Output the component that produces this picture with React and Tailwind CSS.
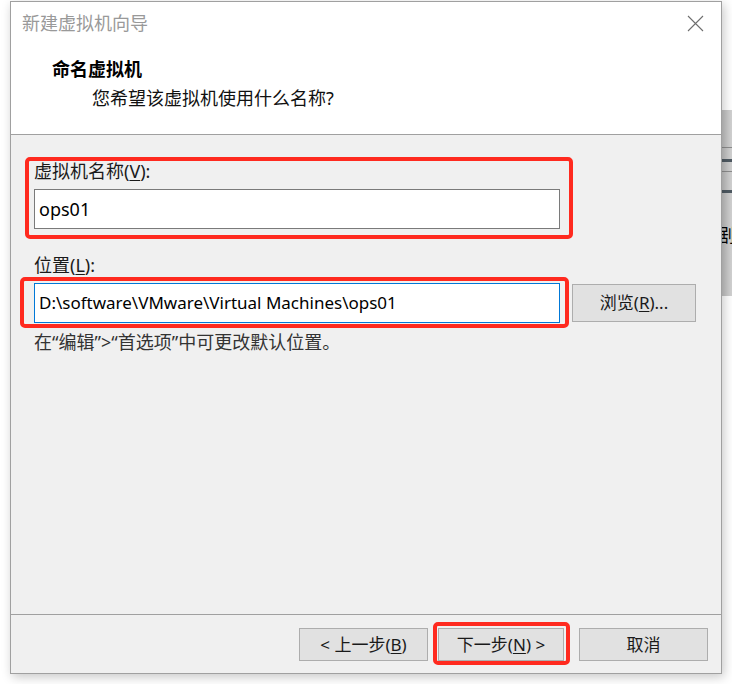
import React from "react";

const font = { fontFamily: '"Noto Sans", "Noto Sans CJK SC", sans-serif' };

function Btn({ children, className = "" }) {
    return (
        <div className={"flex h-[33px] items-center justify-center border border-[#adadad] bg-[#e1e1e1] text-[17px] text-[#1a1a1a] " + className}>
            {children}
        </div>
    );
}

export default function App() {
    return (
        <div className="relative h-[684px] w-[732px] overflow-hidden bg-white" style={font}>
            {/* window behind on the right */}
            <div className="absolute left-[716px] top-[110px] h-[186px] w-[20px] bg-gradient-to-r from-[#b9b9b9] to-[#d8d8d8]">
                <div className="absolute left-0 top-[37px] h-[1px] w-full bg-[#8d8d8d]" />
                <div className="absolute left-0 top-[49px] h-[3px] w-full bg-[#4f5a63]" />
                <div className="absolute left-0 top-[61px] h-[1px] w-full bg-[#8d8d8d]" />
                <div className="absolute left-0 top-[80px] h-[3px] w-full bg-[#4f5a63]" />
                <div className="absolute left-[1px] top-[113px] text-[18px] leading-[24px] text-black">剧</div>
            </div>

            <div className="relative z-10 ml-[10px] mt-[1px] flex h-[673px] w-[712px] flex-col border border-[#a0a0a0] bg-[#f0f0f0] shadow-[2px_3px_10px_rgba(0,0,0,0.22)]">
                <div className="relative h-[133px] border-b border-[#a0a0a0] bg-white">
                    <div className="absolute left-[11px] top-[9px] text-[18px] leading-[24px] text-[#999]">新建虚拟机向导</div>
                    <svg className="absolute right-[17px] top-[13px]" width="17" height="17" viewBox="0 0 17 17">
                        <path d="M1 1 L16 16 M16 1 L1 16" stroke="#6e6e6e" strokeWidth="1.1" fill="none" />
                    </svg>
                    <div className="absolute left-[41px] top-[55px] text-[18px] font-bold leading-[24px] text-black">命名虚拟机</div>
                    <div className="absolute left-[81px] top-[84px] text-[18px] leading-[24px] text-[#111]">您希望该虚拟机使用什么名称?</div>
                </div>

                <div className="flex flex-1 flex-col pl-[23px] pt-[24px] text-[18px] text-[#1a1a1a]">
                    <div className="h-[24px] leading-[24px]">虚拟机名称(<span className="underline underline-offset-2">V</span>):</div>
                    <div className="mt-[6px] flex h-[40px] w-[526px] items-center border border-[#7a7a7a] bg-white pl-[4px] text-[18px] text-black">ops01</div>
                    <div className="mt-[24px] h-[24px] leading-[24px]">位置(<span className="underline underline-offset-2">L</span>):</div>
                    <div className="mt-[6px] flex items-center">
                        <div className="flex h-[40px] w-[526px] items-center border border-[#0078d7] bg-white pl-[4px] text-[17px] text-black">D:\software\VMware\Virtual Machines\ops01</div>
                        <Btn className="ml-[12px] h-[38px] w-[124px]">浏览(<span className="underline underline-offset-2">R</span>)...</Btn>
                    </div>
                    <div className="mt-[7px] h-[24px] leading-[24px] text-[18px] text-[#333]">在“编辑”&gt;“首选项”中可更改默认位置。</div>
                </div>

                <div className="flex h-[59px] items-start border-t border-[#a0a0a0] pr-[13px] pt-[13px]">
                    <div className="flex-1" />
                    <Btn className="w-[129px]">&lt; 上一步(<span className="underline underline-offset-2">B</span>)</Btn>
                    <Btn className="ml-[10px] w-[126px]">下一步(<span className="underline underline-offset-2">N</span>) &gt;</Btn>
                    <Btn className="ml-[15px] w-[129px]">取消</Btn>
                </div>
            </div>

            {/* red annotation frames */}
            <div className="absolute left-[25px] top-[157px] z-20 h-[82px] w-[548px] rounded-[5px] border-[4px] border-[#ff2a1f]" />
            <div className="absolute left-[20px] top-[277px] z-20 h-[51px] w-[549px] rounded-[5px] border-[4px] border-[#ff2a1f]" />
            <div className="absolute left-[433px] top-[622px] z-20 h-[43px] w-[137px] rounded-[5px] border-[4px] border-[#ff2a1f]" />
        </div>
    );
}
